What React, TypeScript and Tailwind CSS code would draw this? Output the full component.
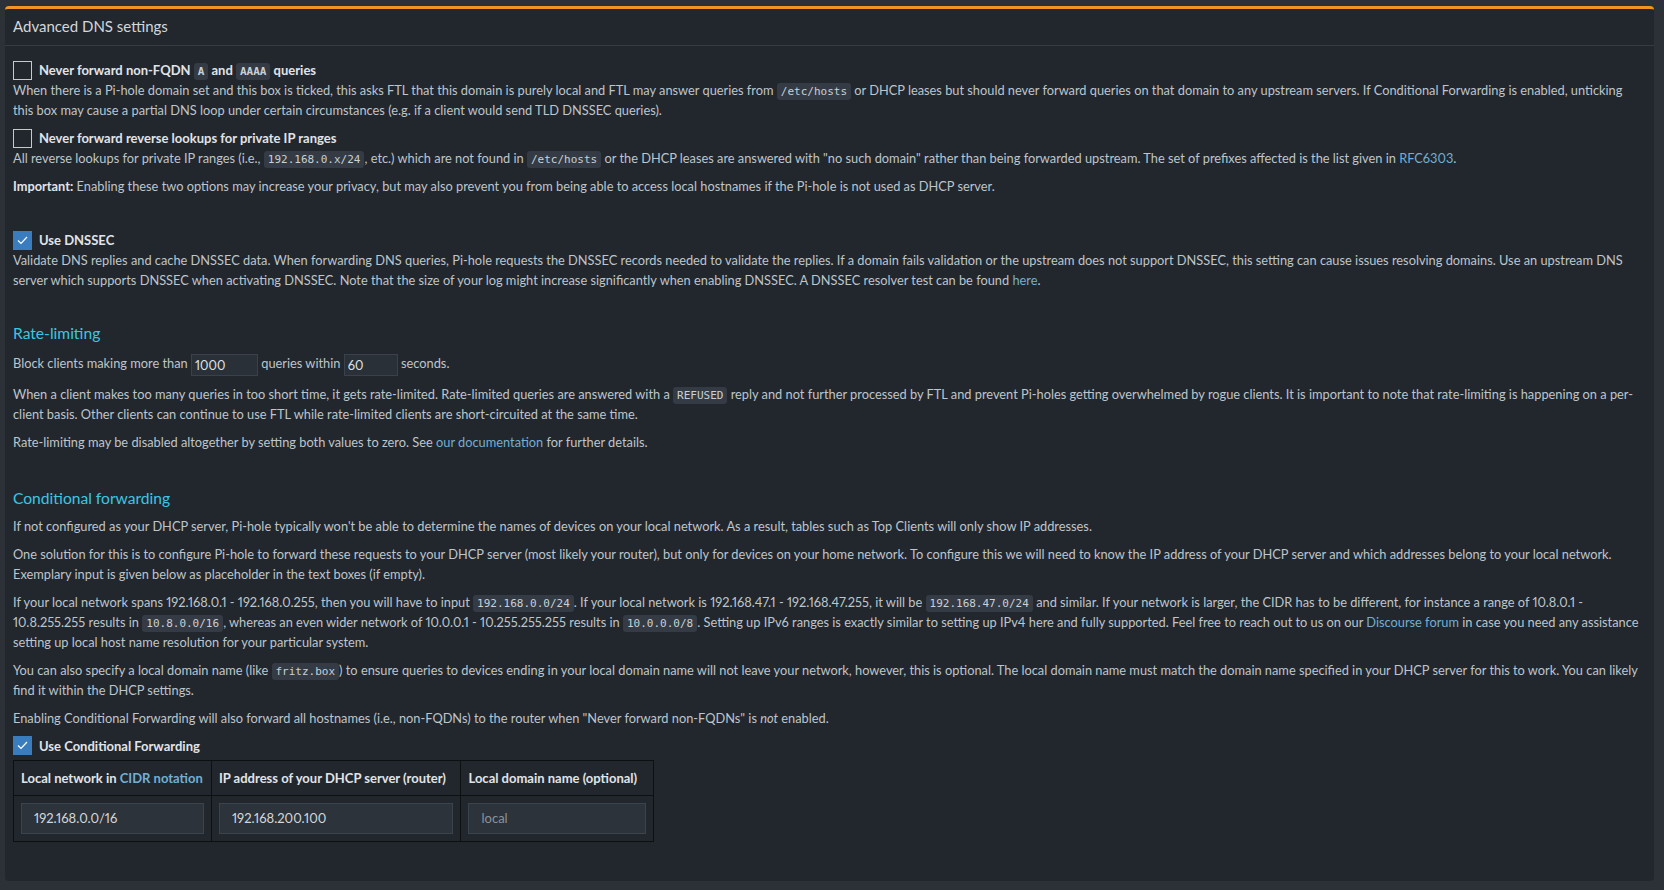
import React from "react";

const Code = ({ children }: { children: React.ReactNode }) => (
  <code className="rounded-[3px] bg-[#343b44] px-[4px] py-[2px] font-['DejaVu_Sans_Mono',monospace] text-[11px] leading-none text-[#c9d0d6]">
    {children}
  </code>
);

const A = ({ children }: { children: React.ReactNode }) => (
  <a href="#" className="text-[#72afd2]">
    {children}
  </a>
);

function Check({ checked }: { checked?: boolean }) {
  if (checked) {
    return (
      <span className="flex h-[19px] w-[19px] shrink-0 items-center justify-center bg-[#3a7dbf]">
        <svg width="11" height="9" viewBox="0 0 11 9">
          <polyline points="1,4.5 4,7.5 10,1" fill="none" stroke="#ffffff" strokeWidth="1.2" />
        </svg>
      </span>
    );
  }
  return <span className="h-[19px] w-[19px] shrink-0 border border-[#c6cacd]" />;
}

function CheckRow({ checked, children, className = "" }: { checked?: boolean; children: React.ReactNode; className?: string }) {
  return (
    <div className={`flex h-[20px] items-center gap-[7px] ${className}`}>
      <Check checked={checked} />
      <span className="text-[13px] font-bold text-[#e0e4e8]">{children}</span>
    </div>
  );
}

const Heading = ({ children, className = "" }: { children: React.ReactNode; className?: string }) => (
  <h4 className={`mb-[8px] text-[15.6px] leading-[20px] text-[#3cc6e2] ${className}`}>{children}</h4>
);

// paragraphs keep the reference's line breaks
const lines = "mb-[8px] whitespace-nowrap";

const cell = "border border-[#0d1013] px-[7px] py-[7px]";
const tableInput =
  "h-[31px] w-full border border-[#3b434c] bg-[#2c333b] px-[12px] text-[13px] text-[#d4d8dc] outline-none placeholder:text-[#8b949c]";

export default function App() {
  return (
    <div className="min-h-screen bg-[#2c3138] pb-[11px] pl-[5px] pr-[10px] pt-[6px] font-['Lato',sans-serif] text-[12.8px] leading-[20px] text-[#bec5cb] proportional-nums">
      <div className="rounded-[4px] border-t-[3px] border-[#f39322] bg-[#22272e]">
        <div className="border-b border-[#363c44] px-[8px] pb-[9px] pt-[7px] text-[15px] leading-[20px] text-[#d3d7db]">
          Advanced DNS settings
        </div>

        <div className="flex flex-col px-[8px] pb-[39px] pt-[14px]">
          <CheckRow>
            Never forward non-FQDN <Code>A</Code> and <Code>AAAA</Code> queries
          </CheckRow>
          <p className={lines}>
            When there is a Pi-hole domain set and this box is ticked, this asks FTL that this domain is purely local and FTL may
            answer queries from <Code>/etc/hosts</Code> or DHCP leases but should never forward queries on that domain to any
            upstream servers. If Conditional Forwarding is enabled, unticking
            <br />
            this box may cause a partial DNS loop under certain circumstances (e.g. if a client would send TLD DNSSEC queries).
          </p>

          <CheckRow>Never forward reverse lookups for private IP ranges</CheckRow>
          <p className="mb-[8px]">
            All reverse lookups for private IP ranges (i.e., <Code>192.168.0.x/24</Code>, etc.) which are not found in{" "}
            <Code>/etc/hosts</Code> or the DHCP leases are answered with "no such domain" rather than being forwarded upstream. The
            set of prefixes affected is the list given in <A>RFC6303</A>.
          </p>
          <p className="mb-[8px]">
            <strong className="text-[#e0e4e8]">Important:</strong> Enabling these two options may increase your privacy, but may
            also prevent you from being able to access local hostnames if the Pi-hole is not used as DHCP server.
          </p>

          <CheckRow checked className="mt-[26px]">
            Use DNSSEC
          </CheckRow>
          <p className={lines}>
            Validate DNS replies and cache DNSSEC data. When forwarding DNS queries, Pi-hole requests the DNSSEC records needed to
            validate the replies. If a domain fails validation or the upstream does not support DNSSEC, this setting can cause
            issues resolving domains. Use an upstream DNS
            <br />
            server which supports DNSSEC when activating DNSSEC. Note that the size of your log might increase significantly when
            enabling DNSSEC. A DNSSEC resolver test can be found <A>here</A>.
          </p>

          <Heading className="mt-[25px]">Rate-limiting</Heading>
          <p className="mb-[8px] leading-[24px]">
            Block clients making more than{" "}
            <input
              defaultValue="1000"
              className="h-[22px] w-[67px] border border-[#3a414a] bg-[#2a3038] px-[3px] align-middle text-[#dde1e5] outline-none"
            />{" "}
            queries within{" "}
            <input
              defaultValue="60"
              className="h-[22px] w-[54px] border border-[#3a414a] bg-[#2a3038] px-[3px] align-middle text-[#dde1e5] outline-none"
            />{" "}
            seconds.
          </p>
          <p className={lines}>
            When a client makes too many queries in too short time, it gets rate-limited. Rate-limited queries are answered with a{" "}
            <Code>REFUSED</Code> reply and not further processed by FTL and prevent Pi-holes getting overwhelmed by rogue clients.
            It is important to note that rate-limiting is happening on a per-
            <br />
            client basis. Other clients can continue to use FTL while rate-limited clients are short-circuited at the same time.
          </p>
          <p className="mb-[8px]">
            Rate-limiting may be disabled altogether by setting both values to zero. See <A>our documentation</A> for further
            details.
          </p>

          <Heading className="mt-[28px]">Conditional forwarding</Heading>
          <p className="mb-[8px]">
            If not configured as your DHCP server, Pi-hole typically won't be able to determine the names of devices on your local
            network. As a result, tables such as Top Clients will only show IP addresses.
          </p>
          <p className={lines}>
            One solution for this is to configure Pi-hole to forward these requests to your DHCP server (most likely your router),
            but only for devices on your home network. To configure this we will need to know the IP address of your DHCP server
            and which addresses belong to your local network.
            <br />
            Exemplary input is given below as placeholder in the text boxes (if empty).
          </p>
          <p className={lines}>
            If your local network spans 192.168.0.1 - 192.168.0.255, then you will have to input <Code>192.168.0.0/24</Code>. If
            your local network is 192.168.47.1 - 192.168.47.255, it will be <Code>192.168.47.0/24</Code> and similar. If your
            network is larger, the CIDR has to be different, for instance a range of 10.8.0.1 -
            <br />
            10.8.255.255 results in <Code>10.8.0.0/16</Code>, whereas an even wider network of 10.0.0.1 - 10.255.255.255 results
            in <Code>10.0.0.0/8</Code>. Setting up IPv6 ranges is exactly similar to setting up IPv4 here and fully supported.
            Feel free to reach out to us on our <A>Discourse forum</A> in case you need any assistance
            <br />
            setting up local host name resolution for your particular system.
          </p>
          <p className={lines}>
            You can also specify a local domain name (like <Code>fritz.box</Code>) to ensure queries to devices ending in your
            local domain name will not leave your network, however, this is optional. The local domain name must match the domain
            name specified in your DHCP server for this to work. You can likely
            <br />
            find it within the DHCP settings.
          </p>
          <p className="mb-[8px]">
            Enabling Conditional Forwarding will also forward all hostnames (i.e., non-FQDNs) to the router when "Never forward
            non-FQDNs" is <em>not</em> enabled.
          </p>

          <CheckRow checked>Use Conditional Forwarding</CheckRow>

          <table className="mt-[4px] w-[641px] border-collapse border border-[#0d1013] text-[13px]">
            <thead>
              <tr className="text-left font-bold text-[#e0e4e8]">
                <th className={`w-[198px] whitespace-nowrap ${cell}`}>
                  Local network in <A>CIDR notation</A>
                </th>
                <th className={`w-[250px] whitespace-nowrap ${cell}`}>IP address of your DHCP server (router)</th>
                <th className={`w-[193px] whitespace-nowrap ${cell}`}>Local domain name (optional)</th>
              </tr>
            </thead>
            <tbody>
              <tr>
                <td className={cell}>
                  <input defaultValue="192.168.0.0/16" className={tableInput} />
                </td>
                <td className={cell}>
                  <input defaultValue="192.168.200.100" className={tableInput} />
                </td>
                <td className={cell}>
                  <input placeholder="local" className={tableInput} />
                </td>
              </tr>
            </tbody>
          </table>
        </div>
      </div>
    </div>
  );
}
